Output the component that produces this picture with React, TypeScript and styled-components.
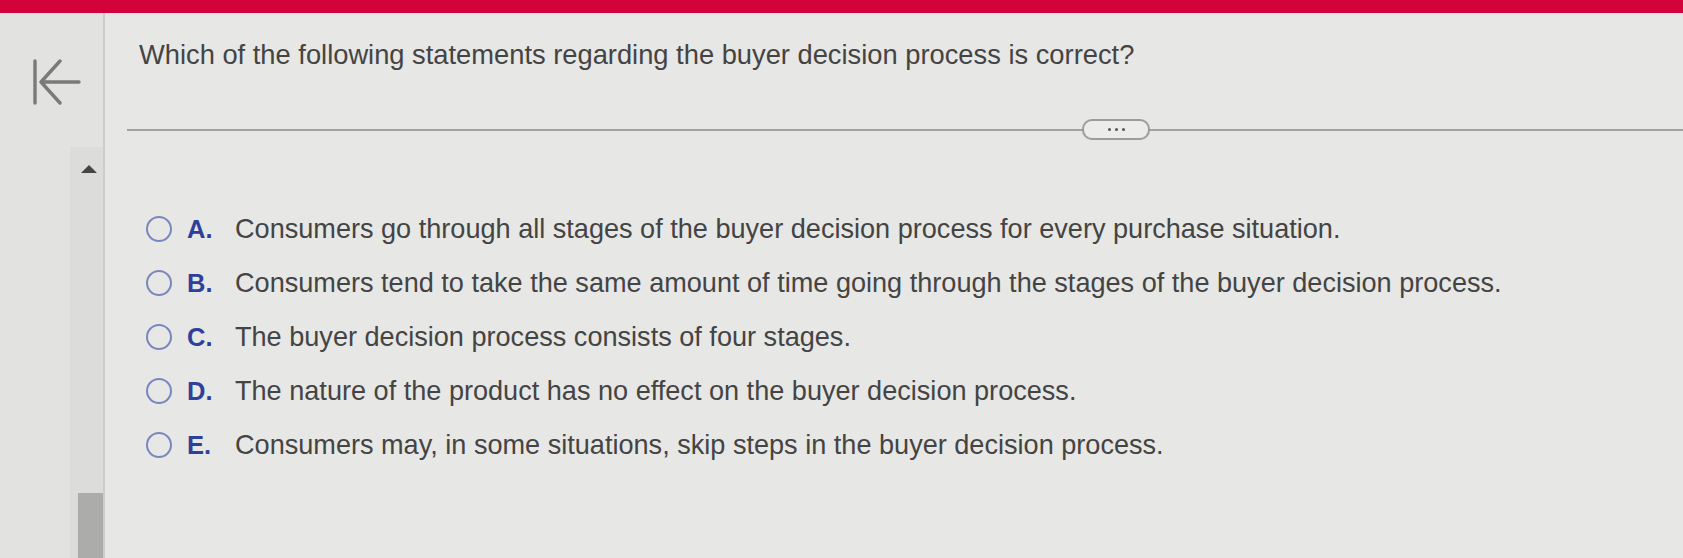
import React from "react";
import styled, { createGlobalStyle } from "styled-components";

const options = [
    { key: "A", text: "Consumers go through all stages of the buyer decision process for every purchase situation." },
    { key: "B", text: "Consumers tend to take the same amount of time going through the stages of the buyer decision process." },
    { key: "C", text: "The buyer decision process consists of four stages." },
    { key: "D", text: "The nature of the product has no effect on the buyer decision process." },
    { key: "E", text: "Consumers may, in some situations, skip steps in the buyer decision process." },
];

const App: React.FC = () => {
    return (
        <Page>
            <GlobalStyle />
            <TopBar />
            <Body>
                <Sidebar>
                    <BackButton aria-label="Back to start">
                        <svg width="50" height="46" viewBox="0 0 50 46" fill="none">
                            <path d="M3 2v42" stroke="#7a7a7a" strokeWidth="3.4" strokeLinecap="round" />
                            <path d="M28 2L9 23l19 21M9 23h38" stroke="#7a7a7a" strokeWidth="3.4" strokeLinecap="round" strokeLinejoin="round" />
                        </svg>
                    </BackButton>
                    <ScrollTrack>
                        <UpArrow />
                        <Thumb />
                    </ScrollTrack>
                </Sidebar>
                <Main>
                    <Question>Which of the following statements regarding the buyer decision process is correct?</Question>
                    <Divider>
                        <LineLeft />
                        <MoreButton>
                            <Dot />
                            <Dot />
                            <Dot />
                        </MoreButton>
                        <LineRight />
                    </Divider>
                    <OptionList>
                        {options.map((o) => (
                            <Option key={o.key}>
                                <Radio />
                                <Letter>{o.key}.</Letter>
                                <OptionText>{o.text}</OptionText>
                            </Option>
                        ))}
                    </OptionList>
                </Main>
            </Body>
        </Page>
    );
};

const GlobalStyle = createGlobalStyle`
    html, body {
        margin: 0;
        padding: 0;
        background: #e5e5e3;
    }
    body {
        font-family: "Liberation Sans", Arial, sans-serif;
    }
`;

const Page = styled.div`
    width: 1683px;
    height: 558px;
    overflow: hidden;
    display: flex;
    flex-direction: column;
    background: #e7e7e5;
`;

const TopBar = styled.div`
    height: 13px;
    background: #d3023b;
    flex-shrink: 0;
`;

const Body = styled.div`
    flex: 1;
    display: flex;
`;

const Sidebar = styled.aside`
    width: 103px;
    flex-shrink: 0;
    border-right: 2px solid #cdcdcb;
    background: #e2e2e0;
    display: flex;
    flex-direction: column;
    align-items: flex-end;
`;

const BackButton = styled.button`
    align-self: flex-start;
    margin: 46px 0 0 32px;
    padding: 0;
    border: none;
    background: none;
    display: flex;
`;

const ScrollTrack = styled.div`
    margin-top: 42px;
    width: 33px;
    flex: 1;
    background: #dcdcda;
    display: flex;
    flex-direction: column;
    align-items: center;
    justify-content: space-between;
    padding-top: 18px;
`;

const UpArrow = styled.div`
    width: 0;
    height: 0;
    border-left: 8px solid transparent;
    border-right: 8px solid transparent;
    border-bottom: 8px solid #454545;
    margin-left: 4px;
`;

const Thumb = styled.div`
    align-self: flex-end;
    width: 25px;
    height: 65px;
    background: #acacaa;
`;

const Main = styled.main`
    flex: 1;
    padding: 26px 0 0 34px;
    display: flex;
    flex-direction: column;
    color: #444444;
`;

const Question = styled.h1`
    margin: 0;
    font-size: 27.3px;
    font-weight: 400;
    line-height: 32px;
`;

const Divider = styled.div`
    margin: 48px 0 0 -12px;
    display: flex;
    align-items: center;
`;

const LineLeft = styled.div`
    width: 955px;
    height: 2px;
    background: #a3a3a1;
`;

const LineRight = styled.div`
    flex: 1;
    height: 2px;
    background: #a3a3a1;
`;

const MoreButton = styled.div`
    width: 64px;
    height: 17px;
    border: 2px solid #9c9c9a;
    border-radius: 10px;
    background: #ececea;
    display: flex;
    align-items: center;
    justify-content: center;
    gap: 4px;
`;

const Dot = styled.span`
    width: 3px;
    height: 3px;
    border-radius: 50%;
    background: #555;
`;

const OptionList = styled.div`
    margin-top: 62px;
    display: flex;
    flex-direction: column;
`;

const Option = styled.label`
    height: 54px;
    display: flex;
    align-items: center;
    padding-left: 7px;
`;

const Radio = styled.span`
    width: 22px;
    height: 22px;
    border-radius: 50%;
    border: 2.5px solid #7a87bd;
    flex-shrink: 0;
`;

const Letter = styled.span`
    width: 48px;
    margin-left: 15px;
    font-size: 25.5px;
    font-weight: 700;
    color: #2f3f9c;
`;

const OptionText = styled.span`
    font-size: 27.1px;
    color: #444444;
    white-space: nowrap;
`;

export default App;
